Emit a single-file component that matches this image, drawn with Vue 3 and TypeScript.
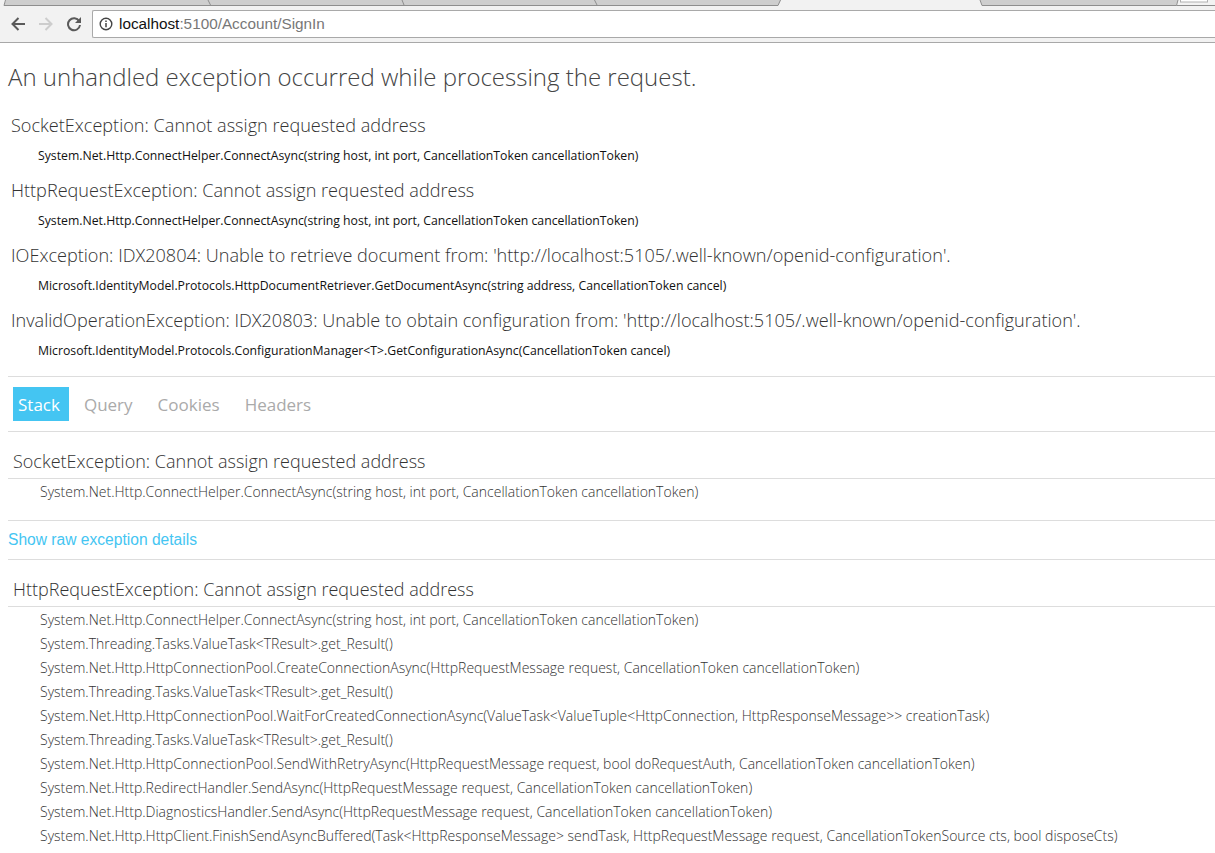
<script setup lang="ts">
const summary = [
  { title: "SocketException: Cannot assign requested address", at: "System.Net.Http.ConnectHelper.ConnectAsync(string host, int port, CancellationToken cancellationToken)" },
  { title: "HttpRequestException: Cannot assign requested address", at: "System.Net.Http.ConnectHelper.ConnectAsync(string host, int port, CancellationToken cancellationToken)" },
  { title: "IOException: IDX20804: Unable to retrieve document from: 'http://localhost:5105/.well-known/openid-configuration'.", at: "Microsoft.IdentityModel.Protocols.HttpDocumentRetriever.GetDocumentAsync(string address, CancellationToken cancel)" },
  { title: "InvalidOperationException: IDX20803: Unable to obtain configuration from: 'http://localhost:5105/.well-known/openid-configuration'.", at: "Microsoft.IdentityModel.Protocols.ConfigurationManager<T>.GetConfigurationAsync(CancellationToken cancel)" },
];
const tabs = ["Stack", "Query", "Cookies", "Headers"];
const frames = [
  "System.Net.Http.ConnectHelper.ConnectAsync(string host, int port, CancellationToken cancellationToken)",
  "System.Threading.Tasks.ValueTask<TResult>.get_Result()",
  "System.Net.Http.HttpConnectionPool.CreateConnectionAsync(HttpRequestMessage request, CancellationToken cancellationToken)",
  "System.Threading.Tasks.ValueTask<TResult>.get_Result()",
  "System.Net.Http.HttpConnectionPool.WaitForCreatedConnectionAsync(ValueTask<ValueTuple<HttpConnection, HttpResponseMessage>> creationTask)",
  "System.Threading.Tasks.ValueTask<TResult>.get_Result()",
  "System.Net.Http.HttpConnectionPool.SendWithRetryAsync(HttpRequestMessage request, bool doRequestAuth, CancellationToken cancellationToken)",
  "System.Net.Http.RedirectHandler.SendAsync(HttpRequestMessage request, CancellationToken cancellationToken)",
  "System.Net.Http.DiagnosticsHandler.SendAsync(HttpRequestMessage request, CancellationToken cancellationToken)",
  "System.Net.Http.HttpClient.FinishSendAsyncBuffered(Task<HttpResponseMessage> sendTask, HttpRequestMessage request, CancellationTokenSource cts, bool disposeCts)",
];
</script>

<template>
  <div class="page">
    <svg class="tabstrip" viewBox="0 0 1215 6" width="1215" height="6">
      <rect width="1215" height="6" fill="#f2f2f2" />
      <path d="M6 0 4 5.5H778L781 0Z M980 0 982 5.5H1176L1178 0Z" fill="#cecece" />
      <path d="M5.5 0 4 5.5H778L780.5 0M980 0 982 5.5H1176.5L1178 0M1176.5 5.5H1215" fill="none" stroke="#8e8e8e" />
      <path d="M208 0 210.5 5M402 0 404 5M594.500 0 597 5" fill="none" stroke="#8e8e8e" />
      <rect x="1180.500" y="-1" width="27" height="3" fill="#fff" stroke="#b0b0b0" />
    </svg>
    <div class="toolbar">
      <svg class="nav" viewBox="0 0 16 16" width="16" height="16"><path d="M15 8H3M8.500 2 2.500 8l6 6" fill="none" stroke="#5a5a5a" stroke-width="2" /></svg>
      <svg class="nav" viewBox="0 0 16 16" width="16" height="16"><path d="M1 8H13M7.500 2l6 6-6 6" fill="none" stroke="#cdcdcd" stroke-width="2" /></svg>
      <svg class="nav" viewBox="0 0 16 16" width="16" height="16"><path d="M13.200 5.200A6 6 0 1 0 14 9" fill="none" stroke="#5a5a5a" stroke-width="2" /><path d="M15 1v6H9z" fill="#5a5a5a" /></svg>
      <div class="omnibox">
        <svg viewBox="0 0 14 14" width="14" height="14"><circle cx="7" cy="7" r="5.800" fill="none" stroke="#444" stroke-width="1.400" /><path d="M7 6v4.300M7 3.500v1.500" stroke="#444" stroke-width="1.500" /></svg>
        <span class="url"><b>localhost</b>:5100/Account/SignIn</span>
      </div>
    </div>
    <main class="content">
      <h1>An unhandled exception occurred while processing the request.</h1>
      <ul class="summary">
        <li v-for="(s, i) in summary" :key="i">
          <h2>{{ s.title }}</h2>
          <p>{{ s.at }}</p>
        </li>
      </ul>
      <ul class="tabs">
        <li v-for="(t, i) in tabs" :key="t" :class="{ active: i === 0 }">{{ t }}</li>
      </ul>
      <section class="stack first">
        <h3>SocketException: Cannot assign requested address</h3>
        <ul><li>{{ frames[0] }}</li></ul>
      </section>
      <div class="raw"><a>Show raw exception details</a></div>
      <section class="stack">
        <h3>HttpRequestException: Cannot assign requested address</h3>
        <ul><li v-for="(f, i) in frames" :key="i">{{ f }}</li></ul>
      </section>
    </main>
  </div>
</template>

<style>
html, body { margin: 0; background: #fff; overflow: hidden; }
</style>

<style scoped>
.page { width: 1215px; height: 853px; overflow: hidden; font-family: "Open Sans", "Liberation Sans", sans-serif; color: #222; }
.tabstrip { display: block; }
.toolbar { height: 36px; background: #f2f2f2; border-bottom: 1px solid #a8a8a8; display: flex; align-items: center; padding-left: 10px; }
.nav { margin-right: 12px; flex: none; }
.omnibox { flex: 1; height: 28px; margin-left: -2px; box-sizing: border-box; background: #fff; border: 1px solid #a9a9a9; border-right: 0; border-radius: 2px 0 0 2px; display: flex; align-items: center; gap: 6px; padding-left: 6px; }
.url { font: 15.300px "Liberation Sans", sans-serif; color: #777; }
.url b { font-weight: 400; color: #111; }
.content { padding: 0 0 0 8px; }
h1 { margin: 17px 0 0; font-size: 24px; line-height: 34px; font-weight: 300; color: #444; }
ul { list-style: none; margin: 0; padding: 0; }
.summary { padding: 18px 0 0 3px; }
.summary li { height: 65px; }
h2 { margin: 0; font-size: 18.100px; line-height: 26px; font-weight: 300; color: #333; }
.summary p { margin: 8px 0 0 27px; font-size: 12.250px; line-height: 20px; color: #111; }
.tabs { display: flex; border-top: 1px solid #ddd; border-bottom: 1px solid #ddd; height: 54px; align-items: center; padding-left: 5px; margin-top: 4px; }
.tabs li { height: 34px; line-height: 35px; padding: 0 5px; margin-right: 15px; font-size: 17px; color: #aaa; }
.tabs li.active { background: #44c5f2; color: #fff; padding-right: 9px; margin-right: 10px; }
.stack h3 { margin: 0; padding: 16px 0 0 5px; height: 30px; font-size: 18px; line-height: 26px; font-weight: 300; color: #333; border-bottom: 1px solid #ddd; }
.stack ul { padding: 1px 0 0 32px; }
.stack li { font-size: 14px; line-height: 24px; font-weight: 300; color: #333; white-space: nowrap; }
.first { height: 88px; }
.raw { border-top: 1px solid #ddd; border-bottom: 1px solid #ddd; height: 38px; font: 15.600px/37px "Liberation Sans", sans-serif; color: #44c5f2; }
</style>
